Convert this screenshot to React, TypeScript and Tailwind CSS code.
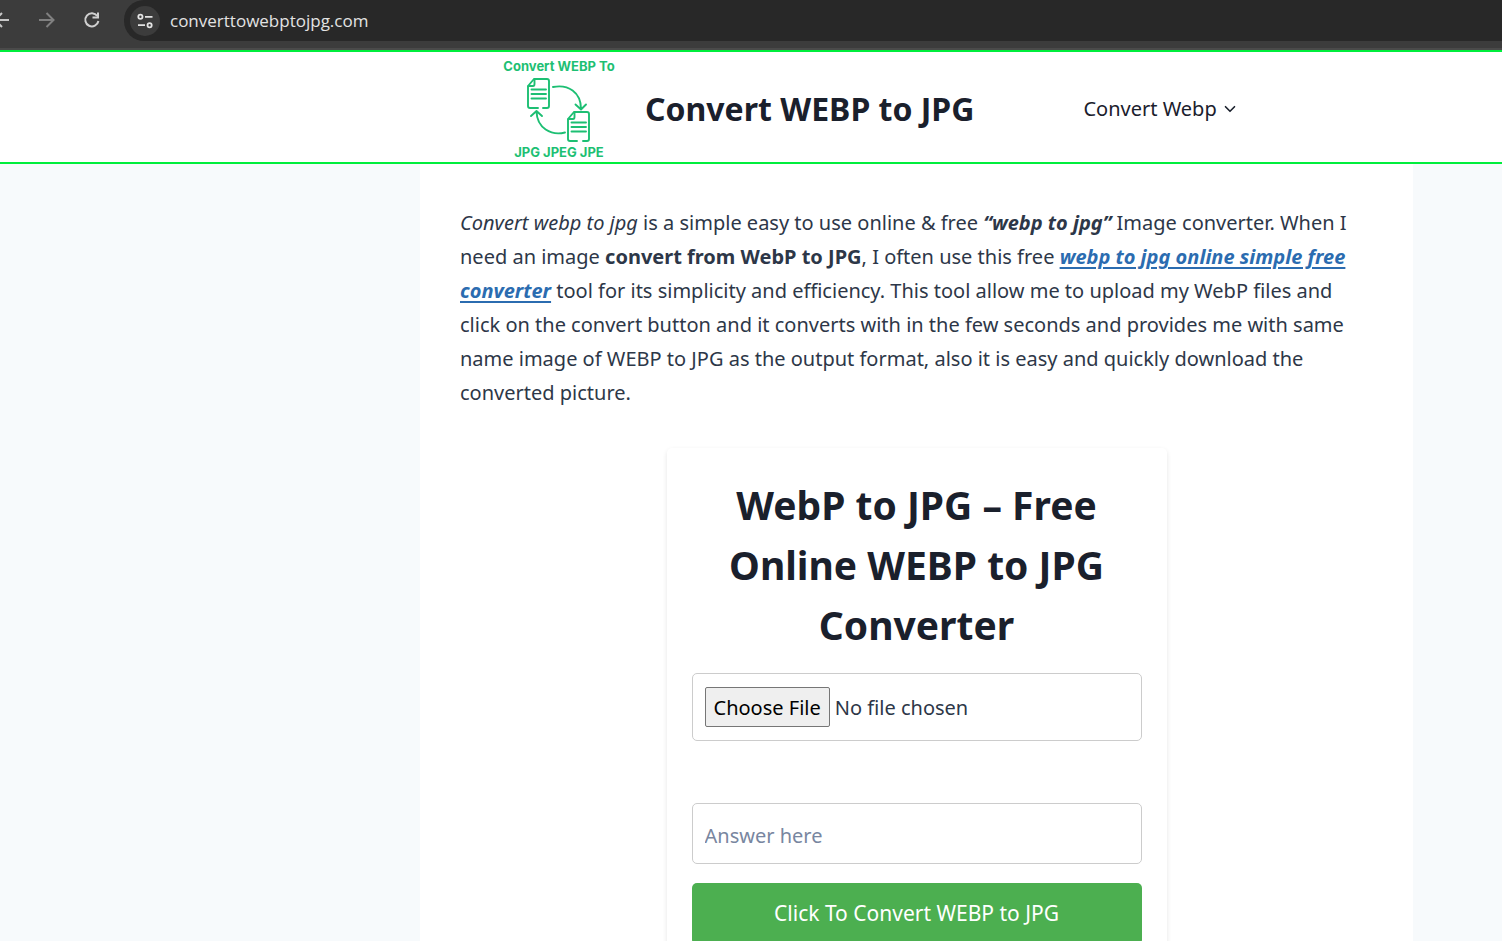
import { ChevronDown } from "lucide-react";

function BrowserBar() {
  return (
    <div className="flex h-[50px] items-start border-b-2 border-[#4a4a4a] bg-[#3c3c3c] font-['Open_Sans',sans-serif]">
      <nav aria-label="Browser" className="flex h-10 items-center">
        <button type="button" aria-label="Back" className="w-6">
          <svg width="10" height="18" viewBox="0 0 10 18" fill="none" stroke="#c7c7c7" strokeWidth="2">
            <path d="M9 9H-5M2 2L-5 9L2 16" />
          </svg>
        </button>
        <button type="button" aria-label="Forward" className="ml-3 w-5">
          <svg width="20" height="18" viewBox="0 0 20 18" fill="none" stroke="#808080" strokeWidth="2">
            <path d="M3 9H17M10.5 2L17.5 9L10.5 16" />
          </svg>
        </button>
        <button type="button" aria-label="Reload" className="ml-6 w-6">
          <svg width="24" height="20" viewBox="0 0 24 20" fill="none" stroke="#d0d0d0" strokeWidth="2">
            <path d="M17.3 6A6.6 6.6 0 1 0 18.4 11" />
            <path d="M18 2.5V7.5H12.5" />
          </svg>
        </button>
      </nav>
      <div className="ml-5 flex h-[41px] flex-1 items-center rounded-l-[20px] bg-[#282828] pl-1.5">
        <button
          type="button"
          aria-label="View site information"
          className="flex size-[30px] items-center justify-center rounded-full bg-[#3c3c3c]"
        >
          <svg width="18" height="18" viewBox="0 0 18 18" fill="none" stroke="#e3e3e3" strokeWidth="1.8">
            <circle cx="4.4" cy="4.8" r="2.1" />
            <path d="M9 4.8H16.5M2 13.2H9" />
            <circle cx="13.6" cy="13.2" r="2.1" />
          </svg>
        </button>
        <input
          type="text"
          aria-label="Address"
          defaultValue="converttowebptojpg.com"
          className="ml-2.5 flex-1 bg-transparent text-[17px] text-[#e3e3e3] outline-none"
        />
      </div>
    </div>
  );
}

function Logo() {
  return (
    <a
      href="#"
      className="flex w-28 flex-col items-center font-['Inter',sans-serif] text-[13px] leading-4 font-bold whitespace-nowrap text-[#1dbf73]"
    >
      <span>Convert WEBP To</span>
      <svg
        width="70"
        height="70"
        viewBox="0 0 70 70"
        fill="none"
        stroke="currentColor"
        strokeWidth="1.9"
        strokeLinecap="round"
        strokeLinejoin="round"
      >
        <path d="M14 34H6Q4 34 4 32V12L10 5H23Q25 5 25 7V32Q25 34 23 34H19" />
        <path d="M4.5 12H9Q10.5 12 10.5 10V5" />
        <path d="M7.5 15.5H22M7.5 20H22M7.5 24.5H22" />
        <path d="M53 67H46Q44 67 44 65V45L50 38H63Q65 38 65 40V65Q65 67 63 67H59" />
        <path d="M44.5 45H49Q50.5 45 50.5 43V38" />
        <path d="M47.5 48.5H62M47.5 53H62M47.5 57.5H62" />
        <path d="M29 13C44 10 57 18 57 35M51.5 30.5L57 35.5L62 30.5" />
        <path d="M41 58.5C27 62 13 54 12.5 37.5M7 42L12.5 37L18 42" />
      </svg>
      <span>JPG JPEG JPE</span>
    </a>
  );
}

function SiteHeader() {
  return (
    <header className="flex h-[114px] items-center border-y-2 border-[#00ee3c] bg-white pt-1 pl-[503px] text-[#1a202c]">
      <Logo />
      <a href="#" className="ml-[30px] text-[32px] font-bold whitespace-nowrap">
        Convert WEBP to JPG
      </a>
      <nav className="ml-[109px]">
        <button type="button" className="flex items-center gap-1 text-[20px] whitespace-nowrap">
          Convert Webp
          <ChevronDown size={18} strokeWidth={2.2} />
        </button>
      </nav>
    </header>
  );
}

function ConvertForm() {
  return (
    <form
      onSubmit={(e) => e.preventDefault()}
      className="mx-auto mt-[38px] w-full max-w-[500px] rounded-[5px] bg-white px-[25px] pt-[27px] pb-6 shadow-[0_2px_5px_rgba(0,0,0,0.1)]"
    >
      <h1 className="text-center text-[39px] leading-[60px] font-bold text-[#1a202c]">
        WebP to JPG – Free Online WEBP to JPG Converter
      </h1>
      <input
        type="file"
        aria-label="WebP file"
        className="mt-[18px] block h-[68px] w-full rounded-[5px] border border-[#cccccc] px-3 py-[13px] text-[20px] leading-[34px] file:mr-[5px] file:h-10 file:rounded-[2px] file:border file:border-solid file:border-[#767676] file:bg-[#efefef] file:px-2 file:pt-0.5 file:text-black"
      />
      <input
        type="text"
        aria-label="Answer"
        placeholder="Answer here"
        className="mt-[62px] block h-[61px] w-full rounded-[5px] border border-[#cccccc] px-3 pt-1 text-[20px] placeholder:text-[#7886a0]"
      />
      <button
        type="submit"
        className="mt-[19px] block h-[62px] w-full rounded-[5px] bg-[#4caf50] text-[21px] text-white"
      >
        Click To Convert WEBP to JPG
      </button>
    </form>
  );
}

export default function App() {
  return (
    <div className="min-h-screen bg-[#f7fafc] font-['Noto_Sans','Open_Sans',sans-serif] text-[#2d3748]">
      <BrowserBar />
      <SiteHeader />
      <div className="pr-[89px] pl-[420px]">
        <main className="bg-white px-10 pt-[42px] pb-10">
          <p className="text-[20px] leading-[34px]">
            <em>Convert webp to jpg</em> is a simple easy to use online &amp; free{" "}
            <strong>
              <em>“webp to jpg”</em>
            </strong>{" "}
            Image converter. When I need an image <strong>convert from WebP to JPG</strong>, I often use this free{" "}
            <a href="#" className="font-bold text-[#2b6cb0] italic underline decoration-2 underline-offset-3">
              webp to jpg online simple free converter
            </a>{" "}
            tool for its simplicity and efficiency. This tool allow me to upload my WebP files and click on the convert
            button and it converts with in the few seconds and provides me with same name image of WEBP to JPG as the
            output format, also it is easy and quickly download the converted picture.
          </p>
          <ConvertForm />
        </main>
      </div>
    </div>
  );
}
